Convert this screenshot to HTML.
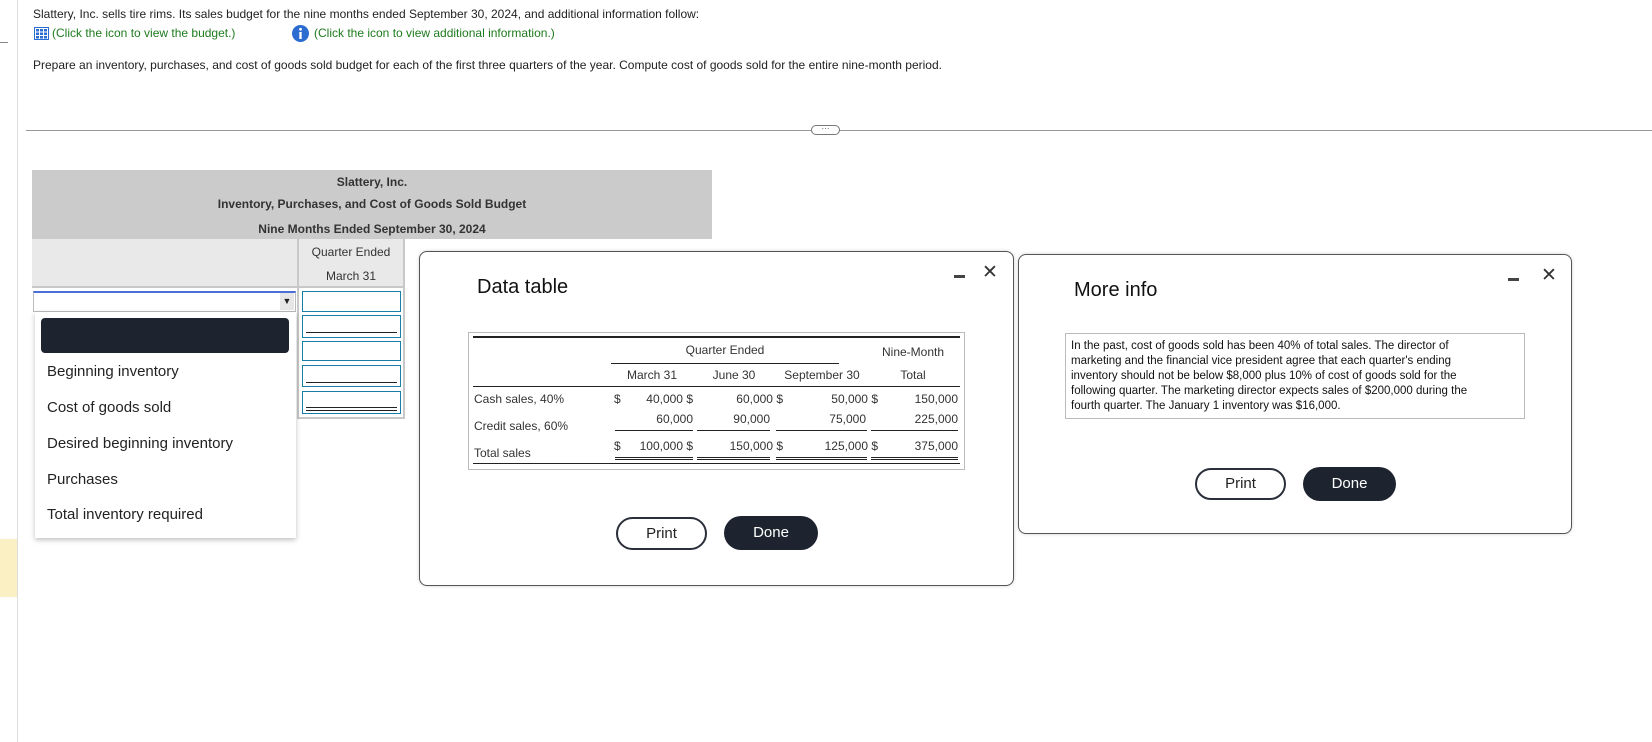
<!DOCTYPE html>
<html><head><meta charset="utf-8"><style>
*{margin:0;padding:0;box-sizing:border-box}
body{width:1652px;height:742px;background:#fff;font-family:"Liberation Sans",Arial,sans-serif;position:relative;overflow:hidden;color:#222}
.a{position:absolute;white-space:nowrap}
.btn{position:absolute;border-radius:17px;font-size:15px;text-align:center}
.pr{border:2px solid #2a2f3a;background:#fff;color:#222}
.dn{background:#1e2330;color:#fff}
.dlg{position:absolute;border:1px solid #555;border-radius:8px;background:#fff;box-shadow:0 0 3px rgba(0,0,0,.2)}
.inp{position:absolute;left:302px;width:99px;border:1px solid #1a7fa8;background:#fff}
.t{font-size:12px;color:#333}
.hl{position:absolute;height:1px;background:#222}
</style></head><body>
<div class="a" style="left:17px;top:0;width:1px;height:742px;background:#ddd"></div>
<div class="a" style="left:0;top:42px;width:8px;height:1px;background:#888"></div>
<div class="a" style="left:0;top:539px;width:17px;height:58px;background:#fbefc4"></div>

<div class="a" style="left:33px;top:7px;font-size:12px;color:#222">Slattery, Inc. sells tire rims. Its sales budget for the nine months ended September 30, 2024, and additional information follow:</div>
<svg class="a" style="left:34px;top:27px" width="15" height="13"><rect x="0.5" y="0.5" width="14" height="12" fill="#fff" stroke="#2b6cd1"/><g fill="#2b6cd1"><rect x="2" y="2" width="3" height="2.5"/><rect x="6" y="2" width="3" height="2.5"/><rect x="10" y="2" width="3" height="2.5"/><rect x="2" y="5.5" width="3" height="2.5"/><rect x="6" y="5.5" width="3" height="2.5"/><rect x="10" y="5.5" width="3" height="2.5"/><rect x="2" y="9" width="3" height="2.5"/><rect x="6" y="9" width="3" height="2.5"/><rect x="10" y="9" width="3" height="2.5"/></g></svg>
<div class="a" style="left:52px;top:26px;font-size:12px;color:#1e7a1e">(Click the icon to view the budget.)</div>
<svg class="a" style="left:292px;top:25px" width="17" height="17"><circle cx="8.5" cy="8.5" r="8.5" fill="#2b6cd1"/><rect x="7.3" y="7" width="2.4" height="7" fill="#fff"/><circle cx="8.5" cy="4.3" r="1.4" fill="#fff"/></svg>
<div class="a" style="left:314px;top:26px;font-size:12px;color:#1e7a1e">(Click the icon to view additional information.)</div>
<div class="a" style="left:33px;top:58px;font-size:12px;color:#222">Prepare an inventory, purchases, and cost of goods sold budget for each of the first three quarters of the year. Compute cost of goods sold for the entire nine-month period.</div>

<div class="a" style="left:26px;top:130px;width:1626px;height:1px;background:#999"></div>
<div class="a" style="left:811px;top:125px;width:29px;height:10px;border:1px solid #777;border-radius:6px;background:#fff;font-size:8px;line-height:6px;text-align:center;color:#444">···</div>

<div class="a" style="left:32px;top:170px;width:680px;height:69px;background:#cbcbcb"></div>
<div class="a t" style="left:32px;width:680px;top:175px;text-align:center;font-weight:bold">Slattery, Inc.</div>
<div class="a t" style="left:32px;width:680px;top:197px;text-align:center;font-weight:bold">Inventory, Purchases, and Cost of Goods Sold Budget</div>
<div class="a t" style="left:32px;width:680px;top:222px;text-align:center;font-weight:bold">Nine Months Ended September 30, 2024</div>
<div class="a" style="left:32px;top:239px;width:373px;height:48px;background:#e9e9e9"></div>
<div class="a" style="left:297px;top:239px;width:108px;height:180px;border:2px solid #c8c8c8;border-top:none"></div>
<div class="a" style="left:32px;top:286px;width:373px;height:2px;background:#c8c8c8"></div>
<div class="a t" style="left:299px;width:104px;top:245px;text-align:center">Quarter Ended</div>
<div class="a t" style="left:299px;width:104px;top:269px;text-align:center">March 31</div>

<div class="a" style="left:33px;top:291px;width:263px;height:21px;border:1px solid #bbb;border-top:2px solid #4a6fd8;background:#fff"></div>
<div class="a" style="left:280px;top:293px;width:14px;height:17px;background:#e6e6e6;font-size:9px;text-align:center;line-height:17px">▼</div>
<div class="inp" style="top:291px;height:21px"></div>
<div class="inp" style="top:315px;height:23px"><div class="hl" style="left:3px;right:3px;top:16px"></div></div>
<div class="inp" style="top:341px;height:20px"></div>
<div class="inp" style="top:365px;height:22px"><div class="hl" style="left:3px;right:3px;top:16px"></div></div>
<div class="inp" style="top:391px;height:23px"><div class="hl" style="left:3px;right:3px;top:15px"></div><div class="hl" style="left:3px;right:3px;top:18px"></div></div>

<div class="a" style="left:35px;top:312px;width:261px;height:226px;background:#fff;box-shadow:0 2px 5px rgba(0,0,0,.25)"></div>
<div class="a" style="left:41px;top:318px;width:248px;height:35px;background:#1e2330;border-radius:4px"></div>
<div class="a" style="left:47px;top:363px;font-size:15px">Beginning inventory</div>
<div class="a" style="left:47px;top:399px;font-size:15px">Cost of goods sold</div>
<div class="a" style="left:47px;top:435px;font-size:15px">Desired beginning inventory</div>
<div class="a" style="left:47px;top:471px;font-size:15px">Purchases</div>
<div class="a" style="left:47px;top:506px;font-size:15px">Total inventory required</div>

<div class="dlg" style="left:419px;top:251px;width:595px;height:335px"></div>
<div class="a" style="left:477px;top:276px;font-size:20px;color:#111">Data table</div>
<div class="a" style="left:954px;top:275px;width:11px;height:3px;background:#444"></div>
<div class="a" style="left:982px;top:261px;font-size:19px;color:#333">✕</div>
<div class="a" style="left:468px;top:332px;width:497px;height:138px;border:1px solid #bbb"></div>
<div class="hl" style="left:473px;width:487px;top:336px;height:2px"></div>
<div class="a t" style="left:611px;width:228px;top:343px;text-align:center">Quarter Ended</div>
<div class="hl" style="left:611px;width:228px;top:363px"></div>
<div class="a t" style="left:868px;width:90px;top:345px;text-align:center">Nine-Month</div>
<div class="a t" style="left:622px;width:60px;top:368px;text-align:center">March 31</div>
<div class="a t" style="left:704px;width:60px;top:368px;text-align:center">June 30</div>
<div class="a t" style="left:780px;width:84px;top:368px;text-align:center">September 30</div>
<div class="a t" style="left:868px;width:90px;top:368px;text-align:center">Total</div>
<div class="hl" style="left:473px;width:487px;top:386px"></div>
<div class="a t" style="left:474px;top:392px">Cash sales, 40%</div>
<div class="a t" style="left:474px;top:419px">Credit sales, 60%</div>
<div class="a t" style="left:474px;top:446px">Total sales</div>
<div class="a t" style="left:614px;top:392px">$</div><div class="a t" style="left:614px;top:439px">$</div>
<div class="a t" style="left:633px;width:60px;top:392px;text-align:right">40,000 $</div>
<div class="a t" style="left:633px;width:60px;top:412px;text-align:right">60,000</div>
<div class="a t" style="left:623px;width:70px;top:439px;text-align:right">100,000 $</div>
<div class="a t" style="left:700px;width:83px;top:392px;text-align:right">60,000 $</div>
<div class="a t" style="left:700px;width:70px;top:412px;text-align:right">90,000</div>
<div class="a t" style="left:700px;width:83px;top:439px;text-align:right">150,000 $</div>
<div class="a t" style="left:780px;width:98px;top:392px;text-align:right">50,000 $</div>
<div class="a t" style="left:780px;width:86px;top:412px;text-align:right">75,000</div>
<div class="a t" style="left:780px;width:98px;top:439px;text-align:right">125,000 $</div>
<div class="a t" style="left:880px;width:78px;top:392px;text-align:right">150,000</div>
<div class="a t" style="left:880px;width:78px;top:412px;text-align:right">225,000</div>
<div class="a t" style="left:880px;width:78px;top:439px;text-align:right">375,000</div>
<div class="hl" style="left:615px;width:78px;top:430px"></div><div class="hl" style="left:697px;width:73px;top:430px"></div><div class="hl" style="left:776px;width:91px;top:430px"></div><div class="hl" style="left:871px;width:87px;top:430px"></div>
<div class="hl" style="left:615px;width:78px;top:457px"></div><div class="hl" style="left:697px;width:73px;top:457px"></div><div class="hl" style="left:776px;width:91px;top:457px"></div><div class="hl" style="left:871px;width:87px;top:457px"></div>
<div class="hl" style="left:615px;width:78px;top:459px"></div><div class="hl" style="left:697px;width:73px;top:459px"></div><div class="hl" style="left:776px;width:91px;top:459px"></div><div class="hl" style="left:871px;width:87px;top:459px"></div>
<div class="hl" style="left:473px;width:487px;top:463px"></div>
<div class="btn pr" style="left:616px;top:517px;width:91px;height:33px;line-height:29px">Print</div>
<div class="btn dn" style="left:724px;top:516px;width:94px;height:34px;line-height:34px">Done</div>

<div class="dlg" style="left:1018px;top:254px;width:554px;height:280px"></div>
<div class="a" style="left:1074px;top:279px;font-size:20px;color:#111">More info</div>
<div class="a" style="left:1508px;top:278px;width:11px;height:3px;background:#444"></div>
<div class="a" style="left:1541px;top:264px;font-size:19px;color:#333">✕</div>
<div class="a" style="left:1065px;top:333px;width:460px;height:86px;border:1px solid #bbb;padding:5px 38px 4px 5px;white-space:normal;font-size:11.5px;line-height:15px;color:#111">In the past, cost of goods sold has been 40% of total sales. The director of marketing and the financial vice president agree that each quarter's ending inventory should not be below $8,000 plus 10% of cost of goods sold for the following quarter. The marketing director expects sales of $200,000 during the fourth quarter. The January 1 inventory was $16,000.</div>
<div class="btn pr" style="left:1195px;top:468px;width:91px;height:32px;line-height:28px">Print</div>
<div class="btn dn" style="left:1303px;top:467px;width:93px;height:34px;line-height:34px">Done</div>
</body></html>
